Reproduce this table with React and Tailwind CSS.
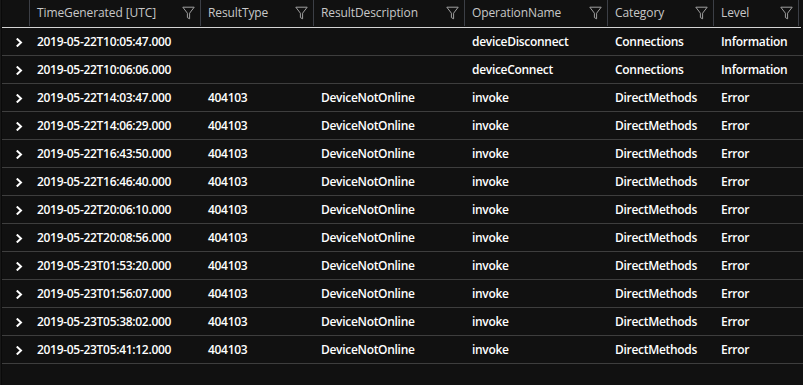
import React from "react";

const rows = [
  ["2019-05-22T10:05:47.000", "", "", "deviceDisconnect", "Connections", "Information"],
  ["2019-05-22T10:06:06.000", "", "", "deviceConnect", "Connections", "Information"],
  ["2019-05-22T14:03:47.000", "404103", "DeviceNotOnline", "invoke", "DirectMethods", "Error"],
  ["2019-05-22T14:06:29.000", "404103", "DeviceNotOnline", "invoke", "DirectMethods", "Error"],
  ["2019-05-22T16:43:50.000", "404103", "DeviceNotOnline", "invoke", "DirectMethods", "Error"],
  ["2019-05-22T16:46:40.000", "404103", "DeviceNotOnline", "invoke", "DirectMethods", "Error"],
  ["2019-05-22T20:06:10.000", "404103", "DeviceNotOnline", "invoke", "DirectMethods", "Error"],
  ["2019-05-22T20:08:56.000", "404103", "DeviceNotOnline", "invoke", "DirectMethods", "Error"],
  ["2019-05-23T01:53:20.000", "404103", "DeviceNotOnline", "invoke", "DirectMethods", "Error"],
  ["2019-05-23T01:56:07.000", "404103", "DeviceNotOnline", "invoke", "DirectMethods", "Error"],
  ["2019-05-23T05:38:02.000", "404103", "DeviceNotOnline", "invoke", "DirectMethods", "Error"],
  ["2019-05-23T05:41:12.000", "404103", "DeviceNotOnline", "invoke", "DirectMethods", "Error"],
];

const headers = ["TimeGenerated [UTC]", "ResultType", "ResultDescription", "OperationName", "Category", "Level"];
const widths = ["w-[171px]", "w-[113px]", "w-[151px]", "w-[143px]", "w-[106px]", "w-[85px]"];

function Funnel() {
  return (
    <svg width="13" height="14" viewBox="0 0 13 14" fill="none" stroke="#a0a0a0" strokeWidth="1" strokeLinejoin="round">
      <path d="M0.8 1.2 H12.2 L7.6 7.2 V12.8 L5.4 11.6 V7.2 Z" />
    </svg>
  );
}

function Chevron() {
  return (
    <svg width="7" height="9" viewBox="0 0 7 9" fill="none" stroke="#ffffff" strokeWidth="2" strokeLinecap="square">
      <path d="M1.5 1.2 L5 4.5 L1.5 7.8" />
    </svg>
  );
}

export default function App() {
  return (
    <div
      className="w-[803px] h-[385px] bg-[#111111] overflow-hidden flex text-[12px]"
      style={{ fontFamily: '"Open Sans", "Noto Sans", sans-serif' }}
    >
      <div className="w-[2px] h-full shrink-0 bg-[#181818] border-r border-[#0a0a0a]" />
      <div className="flex flex-col">
        <div className="flex h-[28px] w-[799px] border-b border-[#d4d4d4] shrink-0">
          <div className="w-[28px] h-[26px] border-r border-[#3c3f46] shrink-0" />
          {headers.map((h, i) => (
            <div
              key={h}
              className={`${widths[i]} h-[26px] border-r border-[#3c3f46] shrink-0 flex items-center justify-between pl-[7px] pr-[5px] text-[#c8c8c8]`}
            >
              <span className="tracking-[-0.1px]">{h}</span>
              <Funnel />
            </div>
          ))}
        </div>
        {rows.map((r, ri) => (
          <div key={ri} className="flex h-[28px] w-[801px] border-b border-[#3e3e3e] shrink-0 items-center font-semibold text-white">
            <div className="w-[28px] shrink-0 flex justify-center pl-[8px] pr-[2px] pt-[1px]">
              <Chevron />
            </div>
            {r.map((c, ci) => (
              <div key={ci} className={`${widths[ci]} shrink-0 pl-[7px] whitespace-nowrap tracking-[-0.3px]`}>
                {c}
              </div>
            ))}
          </div>
        ))}
      </div>
    </div>
  );
}
